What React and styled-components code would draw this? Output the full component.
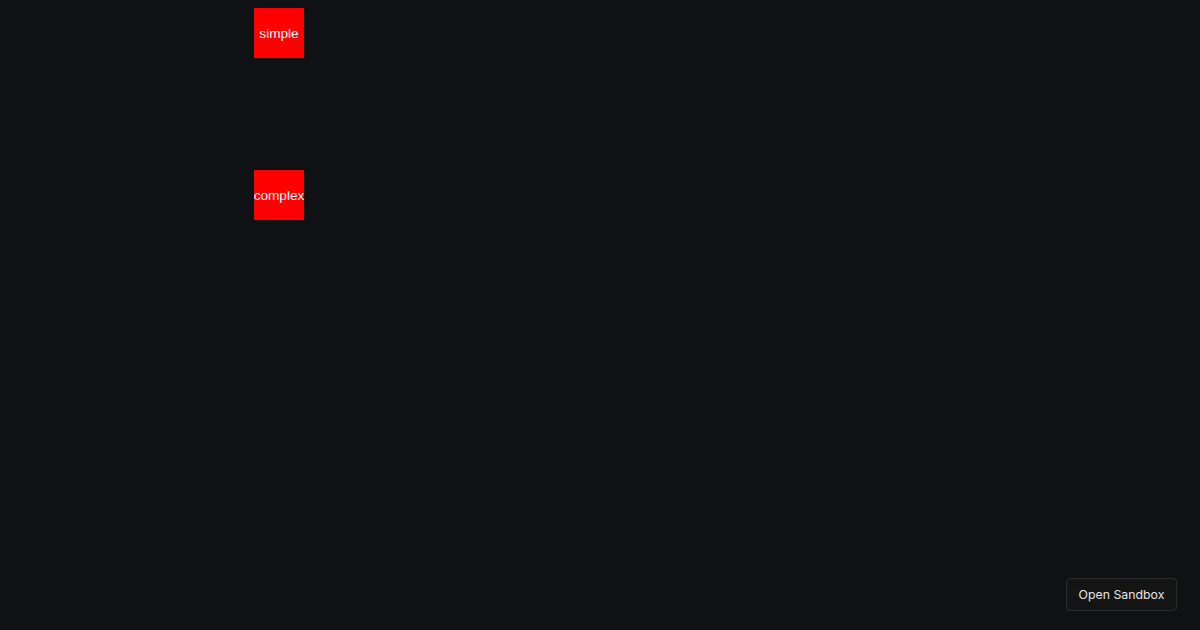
import React from "react";
import styled, { createGlobalStyle } from "styled-components";

const Global = createGlobalStyle`
  html, body { margin: 0; padding: 0; background: #0f1115; height: 100%; }
  body { font-family: "Liberation Sans", Arial, sans-serif; }
`;

const Page = styled.div`
  display: flex;
  flex-direction: column;
  gap: 112px;
  padding: 8px 0 0 254px;
  min-height: 630px;
  box-sizing: border-box;
`;

const Box = styled.div`
  width: 50px;
  height: 50px;
  background: #ff0000;
  color: #ffffff;
  font-family: "Liberation Sans", Arial, sans-serif;
  font-size: 13.6px;
  display: flex;
  align-items: center;
  justify-content: center;
  white-space: nowrap;
  overflow: visible;
`;

const SandboxButton = styled.button`
  position: fixed;
  right: 23px;
  bottom: 19px;
  height: 33px;
  width: 111px;
  padding: 0;
  background: #151414;
  color: #e6e6e6;
  border: 1px solid #2c2c2c;
  border-radius: 4px;
  font-family: Inter, "Liberation Sans", sans-serif;
  font-size: 12.3px;
  cursor: pointer;
`;

export default function App() {
  return (
    <>
      <Global />
      <Page>
        <Box>simple</Box>
        <Box>complex</Box>
      </Page>
      <SandboxButton>Open Sandbox</SandboxButton>
    </>
  );
}
